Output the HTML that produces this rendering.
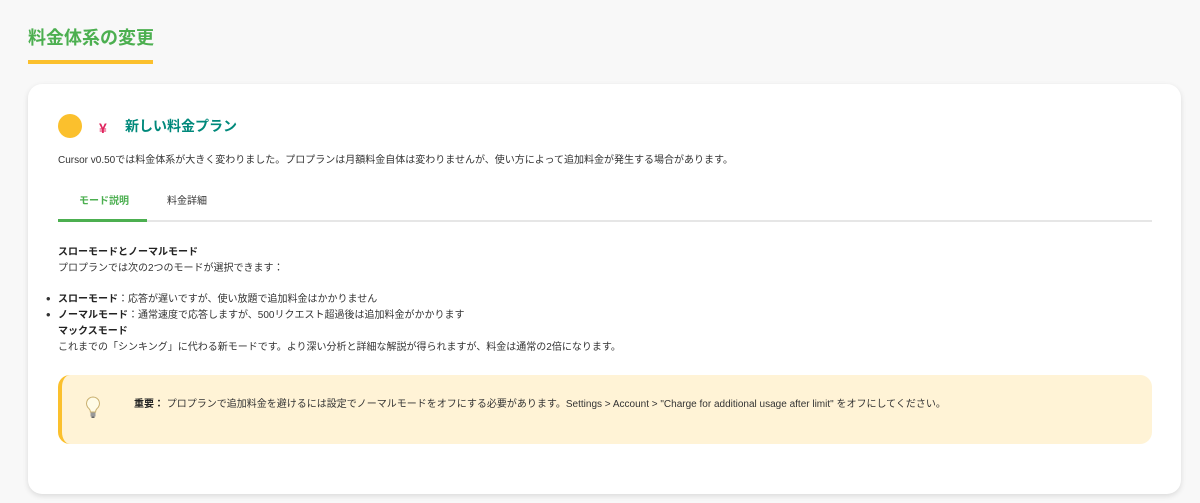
<!DOCTYPE html>
<html><head><meta charset="utf-8"><style>
*{box-sizing:border-box;margin:0;padding:0}
body{width:1200px;height:503px;background:#f8f8f8;font-family:"Liberation Sans","Noto Sans CJK JP",sans-serif;color:#333;overflow:hidden;position:relative}
h1{position:absolute;left:28px;top:25px;font-size:18px;font-weight:bold;color:#4caf50;line-height:26px}
.ul{position:absolute;left:28px;top:60px;width:125px;height:4px;background:#fbc02d}
.card{position:absolute;left:28px;top:84px;width:1153px;height:410px;background:#fff;border-radius:14px;box-shadow:0 2px 6px rgba(0,0,0,.12)}
.dot{position:absolute;left:58px;top:114px;width:24px;height:24px;border-radius:50%;background:#fbc02d}
.yen{position:absolute;left:99px;top:120px;font-size:14px;color:#e0245e;font-weight:bold}
.h2{position:absolute;left:125px;top:115px;font-size:14px;font-weight:bold;color:#00897b;line-height:22px}
.t{position:absolute;font-size:10px;line-height:16px;white-space:nowrap}
.tabs{position:absolute;left:58px;top:220px;width:1094px;height:2px;background:#e6e6e6}
.tabact{position:absolute;left:58px;top:219px;width:89px;height:3px;background:#4caf50}
.note{position:absolute;left:58px;top:375px;width:1094px;height:69px;background:#fff3d6;border-radius:12px;border-left:4px solid #fbc02d}
b{font-weight:bold;color:#222}
</style></head><body>
<h1>料金体系の変更</h1><div class="ul"></div>
<div class="card"></div>
<div class="dot"></div><div class="yen">¥</div><div class="h2">新しい料金プラン</div>
<div class="t" style="left:58px;top:153px">Cursor v0.50では料金体系が大きく変わりました。プロプランは月額料金自体は変わりませんが、使い方によって追加料金が発生する場合があります。</div>
<div class="t" style="left:79px;top:194px;color:#4caf50;font-weight:bold">モード説明</div>
<div class="t" style="left:167px;top:194px">料金詳細</div>
<div class="tabs"></div><div class="tabact"></div>
<div class="t" style="left:58px;top:245px"><b>スローモードとノーマルモード</b></div>
<div class="t" style="left:58px;top:261px">プロプランでは次の2つのモードが選択できます：</div>
<div class="t" style="left:46px;top:291px;font-size:13px">•</div>
<div class="t" style="left:58px;top:292px"><b>スローモード</b>：応答が遅いですが、使い放題で追加料金はかかりません</div>
<div class="t" style="left:46px;top:307px;font-size:13px">•</div>
<div class="t" style="left:58px;top:308px"><b>ノーマルモード</b>：通常速度で応答しますが、500リクエスト超過後は追加料金がかかります</div>
<div class="t" style="left:58px;top:324px"><b>マックスモード</b></div>
<div class="t" style="left:58px;top:340px">これまでの「シンキング」に代わる新モードです。より深い分析と詳細な解説が得られますが、料金は通常の2倍になります。</div>
<div class="note"></div>
<svg style="position:absolute;left:85px;top:396px" width="16" height="24" viewBox="0 0 16 24"><path d="M8 1a6.5 6.5 0 0 0-4 11.6c1 1 1.4 2 1.4 3.4h5.2c0-1.4.4-2.4 1.4-3.4A6.5 6.5 0 0 0 8 1z" fill="#fffbe6" stroke="#c9b070" stroke-width="1"/><rect x="5.5" y="16.5" width="5" height="4" fill="#999"/><rect x="6.5" y="20.5" width="3" height="1.5" fill="#666"/></svg>
<div class="t" style="left:134px;top:397px"><b>重要：</b> プロプランで追加料金を避けるには設定でノーマルモードをオフにする必要があります。Settings &gt; Account &gt; "Charge for additional usage after limit" をオフにしてください。</div>
</body></html>
